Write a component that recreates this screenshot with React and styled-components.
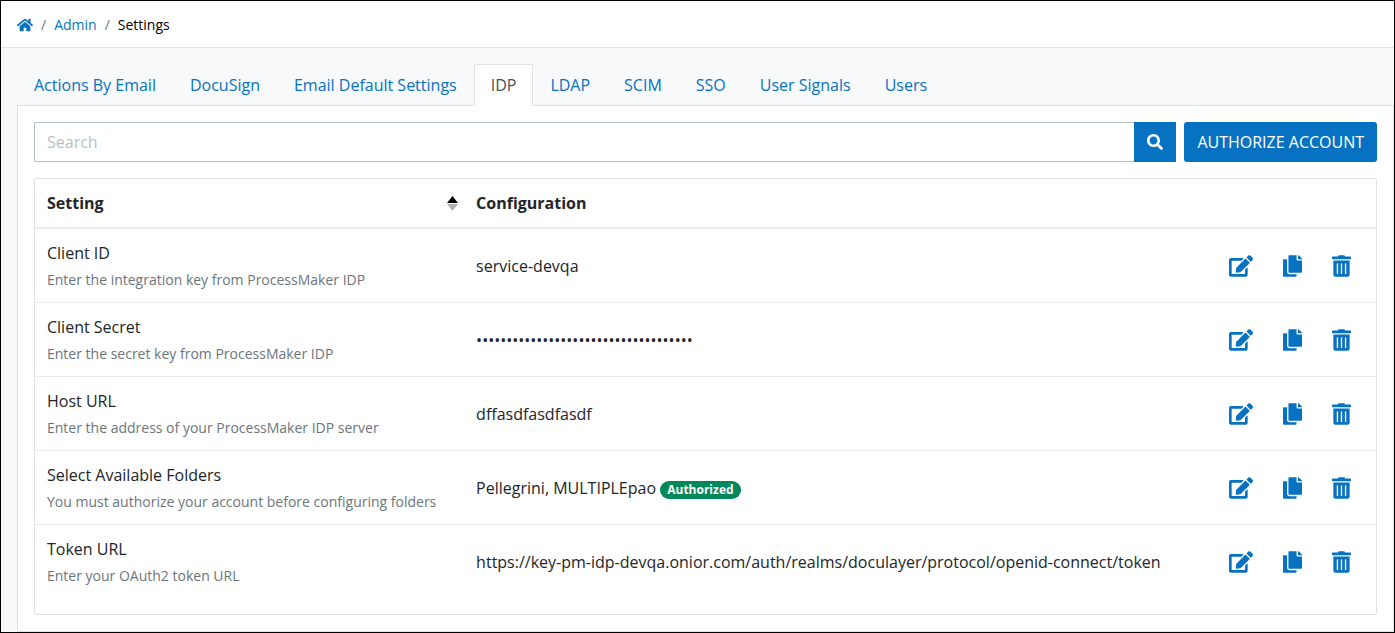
import { useState } from "react"
import styled, { createGlobalStyle } from "styled-components"
import { FaCopy, FaEdit, FaHome, FaSearch, FaTrashAlt } from "react-icons/fa"

const GlobalStyle = createGlobalStyle`
    *, *::before, *::after {
        box-sizing: border-box;
    }

    body {
        margin: 0;
        font-family: "Open Sans", sans-serif;
        font-size: 16px;
        line-height: 24px;
        color: #212529;
    }

    a {
        color: #0872c2;
        text-decoration: none;
    }
`

const Page = styled.div`
    display: flex;
    flex-direction: column;
    min-height: 100vh;
    border: 1px solid #000;
    background: #f7f9fb;
`

const Breadcrumb = styled.nav`
    padding: 12px 16px 10px;
    border-bottom: 1px solid #dee2e6;
    background: #fff;
    font-size: 14px;
`

const BreadcrumbList = styled.ol`
    display: flex;
    margin: 0;
    padding: 0;
    list-style: none;
`

const BreadcrumbItem = styled.li`
    display: flex;
    align-items: center;
    color: #000;

    & + &::before {
        content: "/";
        padding: 0 8px;
        color: #6c757d;
    }

    svg {
        display: block;
    }
`

const Content = styled.main`
    flex: 1;
    display: flex;
    flex-direction: column;
    padding: 16px 0 0 16px;
`

const Tabs = styled.nav`
    display: flex;
    flex-wrap: wrap;
    margin-bottom: -1px;
`

const Tab = styled.a`
    padding: 8px 16px;
    border: 1px solid ${({ $active }) => ($active ? "#dee2e6" : "transparent")};
    border-bottom-color: ${({ $active }) => ($active ? "#fff" : "#dee2e6")};
    border-radius: 2px 2px 0 0;
    background: ${({ $active }) => ($active ? "#fff" : "transparent")};
    color: ${({ $active }) => ($active ? "#495057" : "#0872c2")};
    z-index: 1;
`

const Panel = styled.section`
    display: flex;
    flex-direction: column;
    gap: 16px;
    padding: 16px;
    border: 1px solid #dee2e6;
    background: #fff;
`

const Toolbar = styled.div`
    display: flex;
    gap: 8px;
`

const SearchForm = styled.form`
    display: flex;
    flex: 1;
`

const SearchInput = styled.input`
    flex: 1;
    min-width: 0;
    height: 40px;
    padding: 0 12px;
    border: 1px solid #b6bfc6;
    border-right: 0;
    border-radius: 2px 0 0 2px;
    background: #fff;
    color: #212529;
    font: inherit;

    &::placeholder {
        color: #b6bfc6;
        opacity: 1;
    }
`

const PrimaryButton = styled.button`
    display: flex;
    align-items: center;
    height: 40px;
    padding: 0 13px;
    border: 0;
    border-radius: ${({ $square }) => ($square ? "0" : "3px")};
    background: #0872c2;
    color: #fff;
    font: inherit;
    text-transform: uppercase;
    cursor: pointer;
`

const TableCard = styled.div`
    padding-bottom: 16px;
    border: 1px solid #dee2e6;
    border-radius: 2px;
`

const Table = styled.table`
    width: 100%;
    border-collapse: separate;
    border-spacing: 0;
    table-layout: fixed;
`

const HeaderCell = styled.th`
    width: ${({ $width }) => $width || "auto"};
    padding: 12px;
    padding-right: ${({ $sortable }) => ($sortable ? "6px" : "12px")};
    border-bottom: 2px solid #e9ecef;
    font-weight: 700;
    text-align: left;
`

const SortHeader = styled.div`
    display: flex;
    align-items: center;
    justify-content: space-between;
`

const SortButton = styled.button`
    display: block;
    padding: 0;
    border: 0;
    background: none;
    cursor: pointer;

    svg {
        display: block;
    }
`

const Cell = styled.td`
    padding: 12px;
    border-top: ${({ $first }) => ($first ? "0" : "1px solid #e9ecef")};
    vertical-align: middle;
`

const Description = styled.div`
    margin-top: 4px;
    color: #6c757d;
    font-size: 14px;
    line-height: 21px;
`

const Badge = styled.span`
    display: inline-block;
    padding: 3px 7px;
    border-radius: 10px;
    background: #00875a;
    color: #fff;
    font-size: 12px;
    font-weight: 700;
    line-height: 12px;
`

const Actions = styled.div`
    display: flex;
    justify-content: flex-end;
    gap: 4px;
`

const IconButton = styled.button`
    display: block;
    padding: 0 13px;
    border: 0;
    background: none;
    color: #0872c2;
    cursor: pointer;

    svg {
        display: block;
        width: ${({ $wide }) => ($wide ? "24px" : "19px")};
        height: 22px;
    }
`

const tabs = [
    "Actions By Email",
    "DocuSign",
    "Email Default Settings",
    "IDP",
    "LDAP",
    "SCIM",
    "SSO",
    "User Signals",
    "Users",
]

const settings = [
    {
        name: "Client ID",
        description: "Enter the integration key from ProcessMaker IDP",
        value: "service-devqa",
    },
    {
        name: "Client Secret",
        description: "Enter the secret key from ProcessMaker IDP",
        value: "•".repeat(36),
    },
    {
        name: "Host URL",
        description: "Enter the address of your ProcessMaker IDP server",
        value: "dffasdfasdfasdf",
    },
    {
        name: "Select Available Folders",
        description: "You must authorize your account before configuring folders",
        value: "Pellegrini, MULTIPLEpao",
        badge: "Authorized",
    },
    {
        name: "Token URL",
        description: "Enter your OAuth2 token URL",
        value: "https://key-pm-idp-devqa.onior.com/auth/realms/doculayer/protocol/openid-connect/token",
    },
]

const SortIcon = () => (
    <svg width="11" height="15" viewBox="0 0 11 15" aria-hidden="true">
        <path d="M5.5 0 L11 7 H0 Z" fill="#000" />
        <path d="M0 8 H11 L5.5 15 Z" fill="#b2b2b2" />
    </svg>
)

const SettingRow = ({ setting, first }) => (
    <tr>
        <Cell $first={first}>
            <div>{setting.name}</div>
            <Description>{setting.description}</Description>
        </Cell>
        <Cell $first={first}>
            {setting.value}
            {setting.badge && <> <Badge>{setting.badge}</Badge></>}
        </Cell>
        <Cell $first={first}>
            <Actions>
                <IconButton type="button" $wide aria-label={`Edit ${setting.name}`}><FaEdit /></IconButton>
                <IconButton type="button" aria-label={`Copy ${setting.name}`}><FaCopy /></IconButton>
                <IconButton type="button" aria-label={`Clear ${setting.name}`}><FaTrashAlt /></IconButton>
            </Actions>
        </Cell>
    </tr>
)

const App = () => {
    const [activeTab, setActiveTab] = useState("IDP")

    return (
        <>
            <GlobalStyle />
            <Page>
                <Breadcrumb aria-label="Breadcrumb">
                    <BreadcrumbList>
                        <BreadcrumbItem><a href="#home" aria-label="Home"><FaHome size={16} /></a></BreadcrumbItem>
                        <BreadcrumbItem><a href="#admin">Admin</a></BreadcrumbItem>
                        <BreadcrumbItem aria-current="page">Settings</BreadcrumbItem>
                    </BreadcrumbList>
                </Breadcrumb>
                <Content>
                    <Tabs>
                        {tabs.map(tab => (
                            <Tab key={tab} href="#settings" $active={tab === activeTab} onClick={() => setActiveTab(tab)}>
                                {tab}
                            </Tab>
                        ))}
                    </Tabs>
                    <Panel>
                        <Toolbar>
                            <SearchForm onSubmit={event => event.preventDefault()}>
                                <SearchInput type="text" placeholder="Search" aria-label="Search" />
                                <PrimaryButton type="submit" $square aria-label="Search"><FaSearch /></PrimaryButton>
                            </SearchForm>
                            <PrimaryButton type="button">Authorize Account</PrimaryButton>
                        </Toolbar>
                        <TableCard>
                            <Table>
                                <thead>
                                    <tr>
                                        <HeaderCell $width="32%" $sortable aria-sort="ascending">
                                            <SortHeader>
                                                Setting
                                                <SortButton type="button" aria-label="Sort by setting"><SortIcon /></SortButton>
                                            </SortHeader>
                                        </HeaderCell>
                                        <HeaderCell>Configuration</HeaderCell>
                                        <HeaderCell $width="174px" />
                                    </tr>
                                </thead>
                                <tbody>
                                    {settings.map((setting, index) => (
                                        <SettingRow key={setting.name} setting={setting} first={index === 0} />
                                    ))}
                                </tbody>
                            </Table>
                        </TableCard>
                    </Panel>
                </Content>
            </Page>
        </>
    )
}

export default App
